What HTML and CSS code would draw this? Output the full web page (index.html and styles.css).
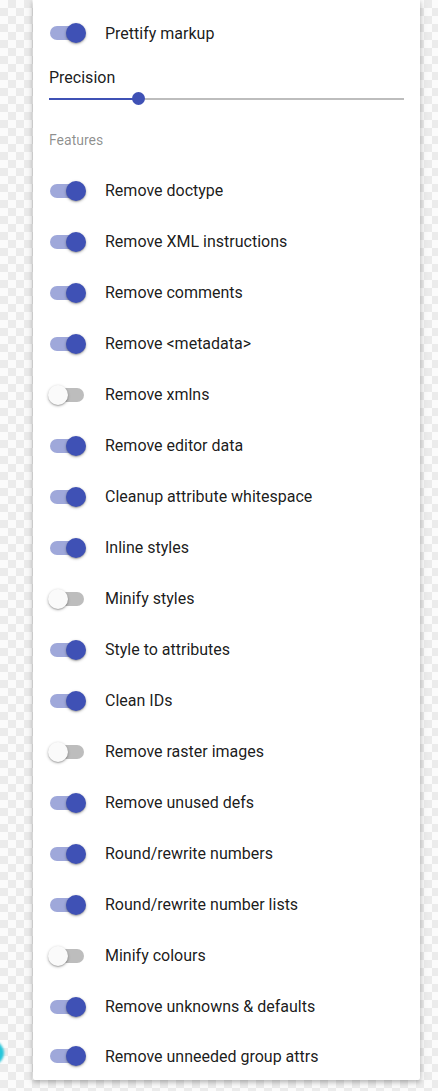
FILE: index.html
```html
<!DOCTYPE html>
<html>
<head>
<meta charset="utf-8">
<link rel="stylesheet" href="styles.css">
</head>
<body>
<div class="edge-blob"></div>
<div class="card">
  <div class="row top-row">
    <span class="switch on"><span class="track"></span><span class="thumb"></span></span>
    <span class="label">Prettify markup</span>
  </div>
  <div class="precision">Precision</div>
  <div class="slider">
    <div class="slider-active" style="width: 89px"></div>
    <div class="slider-rest"></div>
    <div class="slider-thumb" style="left: 83px"></div>
  </div>
  <div class="section">Features</div>
  <div class="list">
    <div class="row"><span class="switch on"><span class="track"></span><span class="thumb"></span></span><span class="label">Remove doctype</span></div>
    <div class="row"><span class="switch on"><span class="track"></span><span class="thumb"></span></span><span class="label">Remove XML instructions</span></div>
    <div class="row"><span class="switch on"><span class="track"></span><span class="thumb"></span></span><span class="label">Remove comments</span></div>
    <div class="row"><span class="switch on"><span class="track"></span><span class="thumb"></span></span><span class="label">Remove &lt;metadata&gt;</span></div>
    <div class="row"><span class="switch"><span class="track"></span><span class="thumb"></span></span><span class="label">Remove xmlns</span></div>
    <div class="row"><span class="switch on"><span class="track"></span><span class="thumb"></span></span><span class="label">Remove editor data</span></div>
    <div class="row"><span class="switch on"><span class="track"></span><span class="thumb"></span></span><span class="label">Cleanup attribute whitespace</span></div>
    <div class="row"><span class="switch on"><span class="track"></span><span class="thumb"></span></span><span class="label">Inline styles</span></div>
    <div class="row"><span class="switch"><span class="track"></span><span class="thumb"></span></span><span class="label">Minify styles</span></div>
    <div class="row"><span class="switch on"><span class="track"></span><span class="thumb"></span></span><span class="label">Style to attributes</span></div>
    <div class="row"><span class="switch on"><span class="track"></span><span class="thumb"></span></span><span class="label">Clean IDs</span></div>
    <div class="row"><span class="switch"><span class="track"></span><span class="thumb"></span></span><span class="label">Remove raster images</span></div>
    <div class="row"><span class="switch on"><span class="track"></span><span class="thumb"></span></span><span class="label">Remove unused defs</span></div>
    <div class="row"><span class="switch on"><span class="track"></span><span class="thumb"></span></span><span class="label">Round/rewrite numbers</span></div>
    <div class="row"><span class="switch on"><span class="track"></span><span class="thumb"></span></span><span class="label">Round/rewrite number lists</span></div>
    <div class="row"><span class="switch"><span class="track"></span><span class="thumb"></span></span><span class="label">Minify colours</span></div>
    <div class="row"><span class="switch on"><span class="track"></span><span class="thumb"></span></span><span class="label">Remove unknowns &amp; defaults</span></div>
    <div class="row"><span class="switch on"><span class="track"></span><span class="thumb"></span></span><span class="label">Remove unneeded group attrs</span></div>
  </div>
</div>
</body>
</html>
```

FILE: styles.css
```css
html, body {
  margin: 0;
  padding: 0;
}
body {
  width: 438px;
  height: 1091px;
  overflow: hidden;
  position: relative;
  font-family: Roboto, "Liberation Sans", sans-serif;
  background: repeating-conic-gradient(#ebebeb 0 25%, #fbfbfb 0 50%) 0 0 / 16px 16px;
}
.edge-blob {
  position: absolute;
  left: -15px;
  top: 1042px;
  width: 19px;
  height: 22px;
  border-radius: 50%;
  background: #26c6da;
  filter: blur(1px);
}
.card {
  margin-left: 33px;
  width: 387px;
  height: 1080px;
  box-sizing: border-box;
  background: #fff;
  box-shadow: 0 2px 4px rgba(0,0,0,0.22), 0 1px 10px rgba(0,0,0,0.12);
  padding: 8px 16px 0 16px;
  border-radius: 0 0 2px 2px;
}
.row {
  display: flex;
  align-items: center;
  height: 51px;
}
.top-row {
  height: 50px;
}
.switch {
  position: relative;
  width: 34px;
  height: 20px;
  margin-left: 1px;
  margin-right: 21px;
  flex: none;
}
.track {
  position: absolute;
  left: 0;
  top: 3px;
  width: 34px;
  height: 14px;
  border-radius: 7px;
  background: #bdbdbd;
}
.thumb {
  position: absolute;
  top: 0;
  left: -2px;
  width: 20px;
  height: 20px;
  border-radius: 50%;
  background: #fafafa;
  box-shadow: 0 1px 3px rgba(0,0,0,0.3), 0 1px 1px rgba(0,0,0,0.14);
}
.switch.on .track {
  background: #9fa8da;
}
.switch.on .thumb {
  left: 16px;
  background: #3f51b5;
}
.label {
  font-size: 16px;
  color: rgba(0,0,0,0.9);
}
.precision {
  margin-top: 10px;
  line-height: 20px;
  font-size: 16px;
  color: rgba(0,0,0,0.9);
}
.slider {
  position: relative;
  margin-top: 1px;
  height: 20px;
  display: flex;
  align-items: center;
}
.slider-active {
  height: 2px;
  background: #3f51b5;
  flex: none;
}
.slider-rest {
  height: 2px;
  flex: 1;
  background: #bdbdbd;
}
.slider-thumb {
  position: absolute;
  top: 3px;
  width: 13px;
  height: 13px;
  border-radius: 50%;
  background: #3f51b5;
}
.section {
  margin-top: 21px;
  margin-bottom: 15px;
  line-height: 20px;
  font-size: 14px;
  color: rgba(0,0,0,0.46);
}
.list .row:last-child {
  height: 48px;
}
```
